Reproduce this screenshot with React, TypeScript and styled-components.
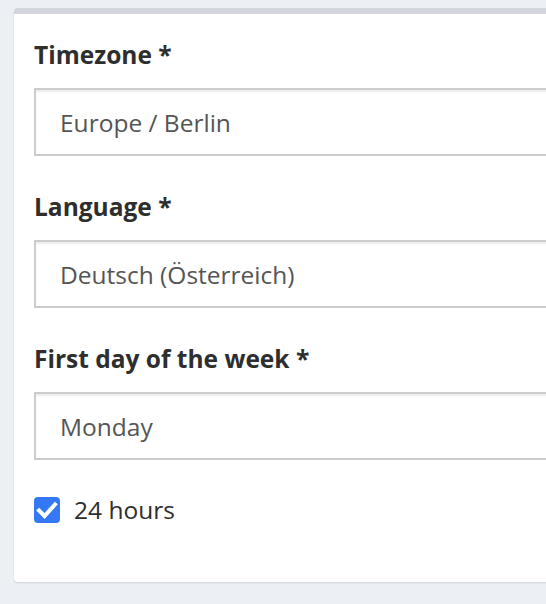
import React from "react";
import styled, { createGlobalStyle } from "styled-components";

const GlobalStyle = createGlobalStyle`
  html, body {
    margin: 0;
    padding: 0;
    background: #eceff4;
    font-family: "Open Sans", "Noto Sans", sans-serif;
  }
`;

type Field = {
  label: string;
  value: string;
};

const fields: Field[] = [
  { label: "Timezone", value: "Europe / Berlin" },
  { label: "Language", value: "Deutsch (Österreich)" },
  { label: "First day of the week", value: "Monday" },
];

const Page = styled.div`
  padding: 8px 0 0 14px;
  height: 604px;
  box-sizing: border-box;
  overflow: hidden;
`;

const Card = styled.div`
  width: 600px;
  background: #ffffff;
  border-top: 6px solid #d2d6dc;
  border-radius: 4px;
  box-shadow: 0 1px 2px rgba(0, 0, 0, 0.12);
  padding: 24px 20px 56px 20px;
  box-sizing: border-box;
`;

const Fields = styled.div`
  display: flex;
  flex-direction: column;
  gap: 34px;
`;

const Label = styled.label`
  display: block;
  font-size: 24.5px;
  font-weight: 700;
  color: #2e2e2e;
  line-height: 34px;
  margin-bottom: 16px;
`;

const Input = styled.div`
  height: 68px;
  box-sizing: border-box;
  border: 2px solid #cccccc;
  box-shadow: inset 0 2px 2px rgba(0, 0, 0, 0.075);
  padding: 0 24px;
  display: flex;
  align-items: center;
  font-size: 24.5px;
  color: #555555;
`;

const CheckRow = styled.label`
  display: flex;
  align-items: center;
  gap: 14px;
  margin-top: 33px;
  font-size: 24.5px;
  color: #2e2e2e;
`;

const CheckBox = styled.span`
  width: 26px;
  height: 26px;
  border-radius: 4px;
  background: #3478f6;
  display: flex;
  align-items: center;
  justify-content: center;
`;

export default function App() {
  return (
    <Page>
      <GlobalStyle />
      <Card>
        <Fields>
          {fields.map((f) => (
            <div key={f.label}>
              <Label>{f.label} *</Label>
              <Input>{f.value}</Input>
            </div>
          ))}
        </Fields>
        <CheckRow>
          <CheckBox>
            <svg width="26" height="26" viewBox="0 0 26 26">
              <path
                d="M5 13.5 L10.5 19 L21 7.5"
                fill="none"
                stroke="#ffffff"
                strokeWidth="4"
                strokeLinecap="square"
                strokeLinejoin="miter"
              />
            </svg>
          </CheckBox>
          24 hours
        </CheckRow>
      </Card>
    </Page>
  );
}
